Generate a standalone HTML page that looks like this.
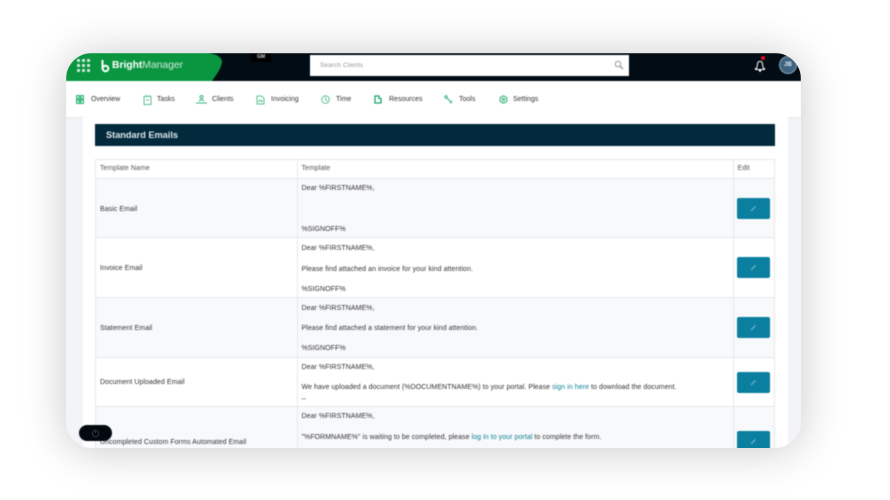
<!DOCTYPE html>
<html><head><meta charset="utf-8"><style>
*{box-sizing:border-box}
html,body{margin:0;padding:0;background:#fff;width:890px;height:500px;overflow:hidden}
body{position:relative;font-family:"Liberation Sans",sans-serif}
.a{position:absolute;white-space:nowrap}
#card{position:absolute;left:66px;top:53px;width:735px;height:395px;border-radius:26px;overflow:hidden;background:#f3f4f7;box-shadow:0 2px 44px rgba(0,0,0,.22)}
#inner{position:absolute;left:0;top:0;width:735px;height:395px;filter:blur(.6px)}
.t{position:absolute;white-space:nowrap;font-size:7px;color:#333;line-height:10px;letter-spacing:.06px}
.nav{position:absolute;top:41px;font-size:7px;line-height:10px;color:#333;white-space:nowrap}
.h{position:absolute;left:29px;height:1px;width:680px;background:#e6e8eb}
.v{position:absolute;top:106px;width:1px;height:289px;background:#e6e8eb}
.row{position:absolute;left:29px;width:680px;background:#f8f9fb}
.btn{position:absolute;left:671px;width:33px;height:21px;background:#0b7f9f;border-radius:2px}
.btn svg{position:absolute;left:12px;top:6px}
a{color:#0b8296;text-decoration:none}
</style></head><body>
<div id="card"><div id="inner">
<div class="a" style="left:0;top:0;width:735px;height:28px;background:#020c14"></div>
<svg class="a" style="left:0;top:0" width="160" height="28"><path d="M0 28V0H138C150 0 156 4 156 9C155 16 150 22 146 28Z" fill="#0a9640"/></svg>
<svg class="a" style="left:11px;top:6px" width="14" height="14" fill="#d5ecdc"><g id="d"><rect x="0" y="0" width="3" height="3" rx="1"/><rect x="5" y="0" width="3" height="3" rx="1"/><rect x="10" y="0" width="3" height="3" rx="1"/><rect x="0" y="5" width="3" height="3" rx="1"/><rect x="5" y="5" width="3" height="3" rx="1"/><rect x="10" y="5" width="3" height="3" rx="1"/><rect x="0" y="10" width="3" height="3" rx="1"/><rect x="5" y="10" width="3" height="3" rx="1"/><rect x="10" y="10" width="3" height="3" rx="1"/></g></svg>
<svg class="a" style="left:35px;top:7px" width="10" height="13" fill="none" stroke="#fff" stroke-width="2"><path d="M1.500 0V9"/><circle cx="4.500" cy="8.500" r="2.800"/></svg>
<div class="a" style="left:46px;top:6px;font-size:10.400px;line-height:14px;color:#fff;font-weight:bold;letter-spacing:-.05px">Bright<span style="font-weight:normal;color:#cfe9d8">Manager</span></div>
<div class="a" style="left:185px;top:0;width:20px;height:9px;background:#000;color:#ccc;font-size:5px;line-height:8px;text-align:center;font-weight:bold">GM</div>
<div class="a" style="left:244px;top:2px;width:319px;height:21px;background:#fff"></div>
<div class="t" style="left:254px;top:8px;color:#999;font-size:6.500px">Search Clients</div>
<svg class="a" style="left:548px;top:7px" width="10" height="10" fill="none" stroke="#999" stroke-width="1"><circle cx="4" cy="4" r="2.800"/><path d="M6 6L9 9" stroke-width="1.400"/></svg>
<svg class="a" style="left:688px;top:6px" width="12" height="13" fill="none" stroke="#fff" stroke-width="1"><path d="M2.500 9.500C3.500 8 3 4.500 4.300 3C5 2.200 7 2.200 7.700 3C9 4.500 8.500 8 9.500 9.500H10.500V10.500H1.500V9.500Z"/><circle cx="6" cy="11.700" r=".7" fill="#fff"/></svg>
<div class="a" style="left:695px;top:3px;width:4px;height:4px;border-radius:50%;background:#e01020"></div>
<div class="a" style="left:713px;top:3px;width:18px;height:18px;border-radius:50%;background:#3f6480;border:1px solid #8aa3b5;color:#dfe8ee;font-size:6px;line-height:16px;text-align:center;font-weight:bold">JB</div>

<div class="a" style="left:0;top:28px;width:735px;height:36px;background:#fff;box-shadow:0 1px 2px rgba(0,0,0,.06)"></div>
<svg class="a" style="left:10px;top:42px" width="8" height="9" fill="none" stroke="#37b57c" stroke-width="1.300"><rect x=".6" y=".6" width="2.800" height="3.200"/><rect x="4.800" y=".6" width="2.800" height="3.200"/><rect x=".6" y="5.200" width="2.800" height="3.200"/><rect x="4.800" y="5.200" width="2.800" height="3.200"/></svg>
<div class="nav" style="left:25px;top:42px">Overview</div>
<svg class="a" style="left:76.500px;top:41.500px" width="9" height="10" fill="none" stroke="#59c193"><rect x="1" y="1.500" width="7" height="8"/><path d="M3 0V2M6 0V2M3 5H6"/></svg>
<div class="nav" style="left:91px;top:42px">Tasks</div>
<svg class="a" style="left:130px;top:41px" width="11" height="10" fill="none" stroke="#37b57c"><circle cx="5.500" cy="3" r="1.500"/><path d="M3 7C4 5.500 7 5.500 8 7M0 9H11"/></svg>
<div class="nav" style="left:146px;top:42px">Clients</div>
<svg class="a" style="left:189.500px;top:42px" width="9" height="10" fill="none" stroke="#59c193"><path d="M1 1H5.500L8 3.500V9H1Z"/><path d="M3 7.500V5.500H6V7.500"/></svg>
<div class="nav" style="left:205px;top:42px">Invoicing</div>
<svg class="a" style="left:255px;top:41.500px" width="9" height="9" fill="none" stroke="#59c193"><circle cx="4.500" cy="4.500" r="3.800"/><path d="M4.500 2V4.500L6.500 6"/></svg>
<div class="nav" style="left:270px;top:42px">Time</div>
<svg class="a" style="left:308px;top:42px" width="8" height="9" fill="none" stroke="#1aa86a" stroke-width="1.300"><path d="M1 1H5V3.500H7V8H1Z"/></svg>
<div class="nav" style="left:323px;top:42px">Resources</div>
<svg class="a" style="left:378px;top:41.500px" width="9" height="9" fill="none" stroke="#59c193" stroke-width="1.300"><circle cx="2" cy="2" r="1.200"/><path d="M3 3L8 8M6 8L8 6"/></svg>
<div class="nav" style="left:393px;top:42px">Tools</div>
<svg class="a" style="left:432.500px;top:41.500px" width="9" height="9" fill="none" stroke="#59c193" stroke-width="1.400"><path d="M4.500 .8L7.800 2.700V6.300L4.500 8.200L1.200 6.300V2.700Z"/><circle cx="4.500" cy="4.500" r="1"/></svg>
<div class="nav" style="left:447px;top:42px">Settings</div>

<div class="a" style="left:17px;top:64px;width:705px;height:331px;background:#fff"></div>
<div class="a" style="left:29px;top:71px;width:680px;height:22px;background:#022a3c;color:#dfe7eb;font-size:9.200px;line-height:23px;padding-left:11px;font-weight:bold">Standard Emails</div>

<div class="row" style="top:125px;height:59px"></div>
<div class="row" style="top:244px;height:60px"></div>
<div class="row" style="top:353px;height:42px"></div>
<div class="h" style="top:106px"></div><div class="h" style="top:125px"></div><div class="h" style="top:184px"></div><div class="h" style="top:244px"></div><div class="h" style="top:304px"></div><div class="h" style="top:353px"></div>
<div class="v" style="left:29px"></div><div class="v" style="left:231px"></div><div class="v" style="left:667px"></div><div class="v" style="left:708px"></div>

<div class="t" style="left:34px;top:111px;color:#555">Template Name</div>
<div class="t" style="left:235.500px;top:111px;color:#555">Template</div>
<div class="t" style="left:671.500px;top:111px;color:#555">Edit</div>

<div class="t" style="left:34px;top:150px;margin-top:2px">Basic Email</div>
<div class="t" style="left:34px;top:209px;margin-top:2px">Invoice Email</div>
<div class="t" style="left:34px;top:269px;margin-top:2px">Statement Email</div>
<div class="t" style="left:34px;top:324px;margin-top:1px">Document Uploaded Email</div>
<div class="t" style="left:34px;top:383px;margin-top:2px">Uncompleted Custom Forms Automated Email</div>

<div class="t" style="left:235.500px;top:131px">Dear %FIRSTNAME%,</div>
<div class="t" style="left:235.500px;top:172px">%SIGNOFF%</div>
<div class="t" style="left:235.500px;top:191px">Dear %FIRSTNAME%,</div>
<div class="t" style="left:235.500px;top:212px">Please find attached an invoice for your kind attention.</div>
<div class="t" style="left:235.500px;top:232px">%SIGNOFF%</div>
<div class="t" style="left:235.500px;top:251px">Dear %FIRSTNAME%,</div>
<div class="t" style="left:235.500px;top:271px">Please find attached a statement for your kind attention.</div>
<div class="t" style="left:235.500px;top:291px">%SIGNOFF%</div>
<div class="t" style="left:235.500px;top:310px">Dear %FIRSTNAME%,</div>
<div class="t" style="left:235.500px;top:330px">We have uploaded a document (%DOCUMENTNAME%) to your portal. Please <a>sign in here</a> to download the document.</div>
<div class="t" style="left:235.500px;top:342px">--</div>
<div class="t" style="left:235.500px;top:359px">Dear %FIRSTNAME%,</div>
<div class="t" style="left:235.500px;top:380px">"%FORMNAME%" is waiting to be completed, please <a>log in to your portal</a> to complete the form.</div>

<div class="btn" style="top:145px"><svg width="9" height="9" stroke="#7fbdd0" stroke-width="1.100"><path d="M2 7L6.500 2.500"/></svg></div>
<div class="btn" style="top:204px"><svg width="9" height="9" stroke="#7fbdd0" stroke-width="1.100"><path d="M2 7L6.500 2.500"/></svg></div>
<div class="btn" style="top:264px"><svg width="9" height="9" stroke="#7fbdd0" stroke-width="1.100"><path d="M2 7L6.500 2.500"/></svg></div>
<div class="btn" style="top:319px"><svg width="9" height="9" stroke="#7fbdd0" stroke-width="1.100"><path d="M2 7L6.500 2.500"/></svg></div>
<div class="btn" style="top:378px"><svg width="9" height="9" stroke="#7fbdd0" stroke-width="1.100"><path d="M2 7L6.500 2.500"/></svg></div>
</div></div>
<div class="a" style="left:79px;top:425px;width:33px;height:16px;border-radius:8px;background:#03090f;filter:blur(.5px)"></div>
<svg class="a" style="left:90px;top:428px" width="11" height="11" fill="none" stroke="#2a3640"><circle cx="5.500" cy="5.500" r="3.200"/><path d="M5.500 2.500V5"/></svg>
</body></html>
